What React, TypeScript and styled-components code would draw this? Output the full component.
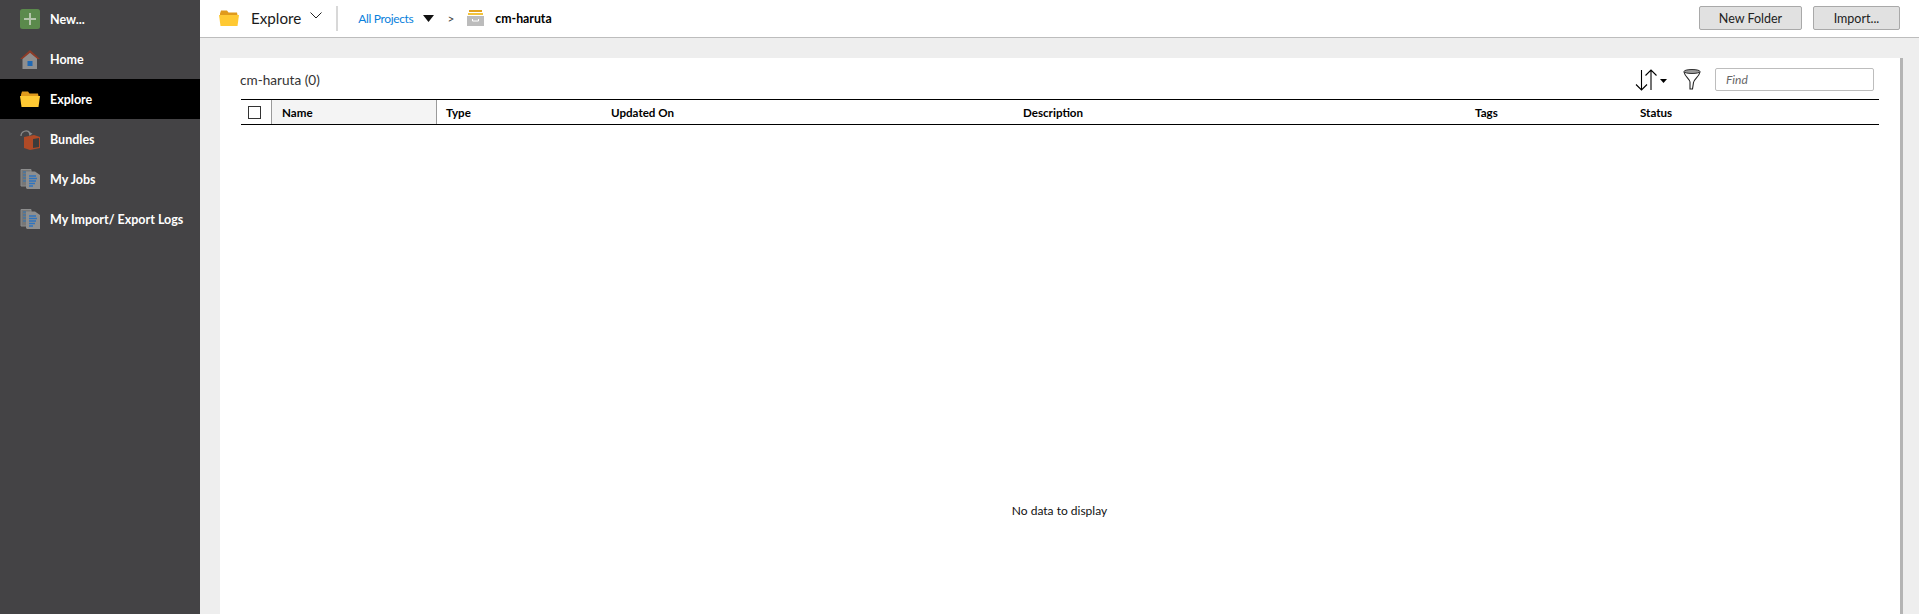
import React from "react";
import styled, { createGlobalStyle } from "styled-components";

const Global = createGlobalStyle`
  html, body { margin: 0; padding: 0; height: 100%; overflow: hidden; background: #eeeeee; }
  #root { height: 100%; }
  * { box-sizing: border-box; }
`;

const Page = styled.div`
  display: flex;
  width: 1919px;
  height: 614px;
  overflow: hidden;
  font-family: Lato, "Liberation Sans", sans-serif;
  color: #000;
`;

const Sidebar = styled.nav`
  width: 200px;
  flex: none;
  background: #444345;
  display: flex;
  flex-direction: column;
`;

const NavItem = styled.div<{ $active?: boolean }>`
  height: 40px;
  flex: none;
  display: flex;
  align-items: center;
  gap: 10px;
  padding-left: 20px;
  background: ${(p) => (p.$active ? "#000" : "transparent")};
  color: #fff;
  font-size: 12.5px;
  font-weight: 700;
  &:first-child { height: 39px; padding-bottom: 1px; }
`;

const Main = styled.div`
  flex: 1;
  min-width: 0;
  display: flex;
  flex-direction: column;
`;

const TopBar = styled.header`
  height: 38px;
  flex: none;
  background: #fff;
  border-bottom: 1px solid #bdbdbd;
  display: flex;
  align-items: center;
  padding: 0 19px 1px 19px;
`;

const PageTitle = styled.span`
  font-size: 15.2px;
  margin-left: 12px;
  color: #1a1a1a;
`;

const Chevron = styled.svg`
  margin: -5px 0 0 9px;
`;

const Divider = styled.span`
  width: 2px;
  height: 25px;
  background: #d8d8d8;
  margin: 0 20px 0 14px;
`;

const Crumb = styled.a`
  color: #0a7fdc;
  font-size: 12px;
  letter-spacing: -0.35px;
`;

const Caret = styled.svg`
  margin-left: 10px;
`;

const Separator = styled.span`
  font-size: 12px;
  color: #444;
  margin: 0 13px 0 13px;
`;

const CurrentCrumb = styled.span`
  font-size: 12.3px;
  font-weight: 700;
  margin-left: 11px;
`;

const Actions = styled.div`
  margin-left: auto;
  display: flex;
  gap: 11px;
`;

const Button = styled.button<{ $w: number }>`
  width: ${(p) => p.$w}px;
  height: 24px;
  background: #e1e1e1;
  border: 1px solid #a9a9a9;
  border-radius: 2px;
  font: 12.5px Lato, "Liberation Sans", sans-serif;
  color: #222;
  padding: 0;
`;

const Content = styled.main`
  flex: 1;
  min-height: 0;
  padding: 20px 19px 0 20px;
`;

const Card = styled.section`
  height: 100%;
  background: #fff;
  box-shadow: 3px 0 0 #b4b4b4;
  padding: 0 21px 0 20px;
  display: flex;
  flex-direction: column;
`;

const CardHead = styled.div`
  height: 41px;
  flex: none;
  display: flex;
  align-items: center;
  padding-top: 2px;
`;

const CardTitle = styled.span`
  font-size: 13.6px;
  color: #333;
`;

const Tools = styled.div`
  margin-left: auto;
  margin-right: 5px;
  display: flex;
  align-items: center;
`;

const ToolGap = styled.span`
  width: 16px;
`;

const Find = styled.input`
  width: 159px;
  height: 23px;
  margin-left: 14px;
  border: 1px solid #bdbdbd;
  border-radius: 2px;
  padding: 0 10px;
  font: italic 12px Lato, "Liberation Sans", sans-serif;
  &::placeholder { color: #666; }
`;

const HeaderRow = styled.div`
  height: 26px;
  flex: none;
  margin-left: 1px;
  border-top: 1px solid #000;
  border-bottom: 1px solid #000;
  display: grid;
  grid-template-columns: 30px 166px 165px 412px 452px 165px 1fr;
  font-size: 11.6px;
  font-weight: 700;
`;

const HeaderCell = styled.div<{ $selected?: boolean }>`
  display: flex;
  align-items: center;
  padding-left: ${(p) => (p.$selected ? 10 : 9)}px;
  ${(p) =>
    p.$selected
      ? "background:#f4f4f4;border-left:1px solid #9a9a9a;border-right:1px solid #9a9a9a;"
      : ""}
`;

const CheckCell = styled.div`
  display: flex;
  align-items: center;
  justify-content: center;
  padding-right: 3px;
`;

const Check = styled.span`
  width: 13px;
  height: 13px;
  border: 1px solid #333;
`;

const Empty = styled.div`
  flex: 1;
  display: flex;
  justify-content: center;
  padding: 378px 0 0 0;
  font-size: 12px;
  color: #111;
`;

const Folder = ({ size = 20 }: { size?: number }) => (
  <svg width={size} height={size * 0.8} viewBox="0 0 20 16">
    <path d="M1 3.5 L2 0.5 H8 L9.5 2.5 H18 L18.5 5 H1Z" fill="#e09a1c" />
    <path d="M0 5 H20 L18.5 16 H1.5Z" fill="#ffc933" />
  </svg>
);

const NewIcon = () => (
  <svg width="20" height="20" viewBox="0 0 20 20">
    <rect width="20" height="20" rx="2.5" fill="#5b8a4c" />
    <path d="M10 4V16M4 10H16" stroke="#b3c4aa" strokeWidth="2" />
  </svg>
);

const HomeIcon = () => (
  <svg width="20" height="19" viewBox="0 0 20 19">
    <path d="M2.5 8 L10 2 L17 8 V19 H2.5Z" fill="#8f8f8f" />
    <path d="M0 9 L10 0 L20 9 H17.5 L10 2.8 L2.5 9Z" fill="#8e3c28" />
    <rect x="7.5" y="11" width="5" height="5" fill="#1f69b5" />
  </svg>
);

const BundleIcon = () => (
  <svg width="20" height="21" viewBox="0 0 20 21">
    <path d="M1 7 A5 5 0 0 1 10 4" fill="none" stroke="#8a8a8a" strokeWidth="1.3" />
    <path d="M8.5 3 L12.5 4.5 L9.5 7Z" fill="#8a8a8a" />
    <path d="M4 8 L14 6 L20 8 V19 L10 21 L4 19Z" fill="#b04a26" />
    <path d="M13 10 L19 9 V18 L13 19Z" fill="#3c3c3c" />
  </svg>
);

const DocIcon = () => (
  <svg width="20" height="20" viewBox="0 0 20 20">
    <path d="M1 0.5 H11 V17 H1Z" fill="#777" stroke="#8d8d8d" />
    <path d="M3 3 H6 M3 6 H6 M3 9 H6 M3 12 H6" stroke="#2f74b8" strokeWidth="1.2" />
    <path d="M6 2.5 H15 L20 6 V20 H7 L6 19Z" fill="#8f8f8f" />
    <path d="M9 7H16 M9 9.5H17 M9 12H16 M9 14.5H15 M9 17H13" stroke="#2f74c0" strokeWidth="1.4" />
  </svg>
);

const ArchiveIcon = () => (
  <svg width="17" height="16" viewBox="0 0 17 16">
    <rect x="2" y="0" width="13" height="2" fill="#e3a320" />
    <rect x="1" y="3" width="15" height="2" fill="#f2c33c" />
    <rect x="0" y="6" width="17" height="10" fill="#bcbcbc" />
    <path d="M5.5 9 V11 H11.5 V9" fill="none" stroke="#fff" strokeWidth="1" />
  </svg>
);

const SortIcon = () => (
  <svg width="32" height="22" viewBox="0 0 32 22">
    <path d="M6.5 1V21M1 15.5L6.5 21L12 15.5M16 21V1M10.5 6.5L16 1L21.5 6.5" fill="none" stroke="#000" strokeWidth="1.1" />
    <path d="M25 10H32L28.5 14Z" fill="#000" />
  </svg>
);

const FunnelIcon = () => (
  <svg width="18" height="21" viewBox="0 0 18 21">
    <ellipse cx="9" cy="2.5" rx="8" ry="2" fill="#9a9a9a" stroke="#333" />
    <path d="M1 3 C2 8 7 10 7 13 V20 H9.5 L10.5 13.5 C11 10 16 8 17 3" fill="none" stroke="#222" strokeWidth="1.1" />
  </svg>
);

const nav: { label: string; icon: React.ReactNode; active?: boolean }[] = [
  { label: "New...", icon: <NewIcon /> },
  { label: "Home", icon: <HomeIcon /> },
  { label: "Explore", icon: <Folder />, active: true },
  { label: "Bundles", icon: <BundleIcon /> },
  { label: "My Jobs", icon: <DocIcon /> },
  { label: "My Import/ Export Logs", icon: <DocIcon /> },
];

export default function App() {
  return (
    <Page>
      <Global />
      <Sidebar>
        {nav.map((n) => (
          <NavItem key={n.label} $active={n.active}>
            {n.icon}
            <span>{n.label}</span>
          </NavItem>
        ))}
      </Sidebar>
      <Main>
        <TopBar>
          <Folder />
          <PageTitle>Explore</PageTitle>
          <Chevron width="12" height="7" viewBox="0 0 12 7">
            <path d="M0.5 0.5L6 6L11.5 0.5" fill="none" stroke="#222" strokeWidth="1" />
          </Chevron>
          <Divider />
          <Crumb>All Projects</Crumb>
          <Caret width="11" height="7" viewBox="0 0 11 7">
            <path d="M0 0H11L5.5 7Z" fill="#111" />
          </Caret>
          <Separator>&gt;</Separator>
          <ArchiveIcon />
          <CurrentCrumb>cm-haruta</CurrentCrumb>
          <Actions>
            <Button $w={103}>New Folder</Button>
            <Button $w={87}>Import...</Button>
          </Actions>
        </TopBar>
        <Content>
          <Card>
            <CardHead>
              <CardTitle>cm-haruta (0)</CardTitle>
              <Tools>
                <SortIcon />
                <ToolGap />
                <FunnelIcon />
                <Find placeholder="Find" />
              </Tools>
            </CardHead>
            <HeaderRow>
              <CheckCell>
                <Check />
              </CheckCell>
              <HeaderCell $selected>Name</HeaderCell>
              <HeaderCell>Type</HeaderCell>
              <HeaderCell>Updated On</HeaderCell>
              <HeaderCell>Description</HeaderCell>
              <HeaderCell>Tags</HeaderCell>
              <HeaderCell>Status</HeaderCell>
            </HeaderRow>
            <Empty>No data to display</Empty>
          </Card>
        </Content>
      </Main>
    </Page>
  );
}
